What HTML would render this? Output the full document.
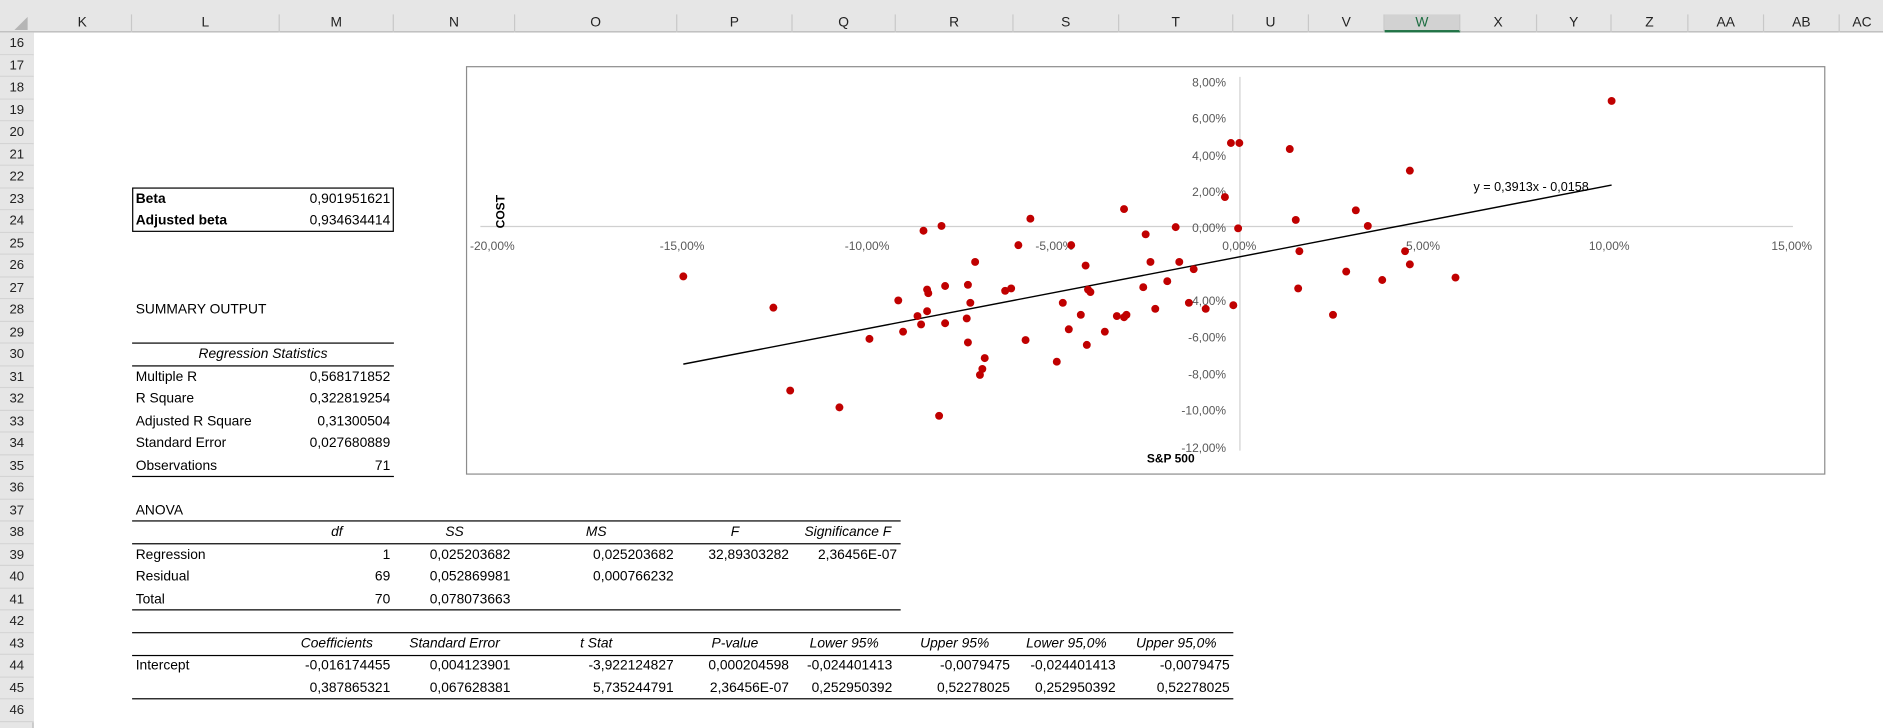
<!DOCTYPE html>
<html><head><meta charset="utf-8"><style>
html,body{margin:0;padding:0;width:1883px;height:727px;overflow:hidden;background:#fff}
#w{position:absolute;left:0;top:0;width:1569px;height:606px;transform:scale(1.2009,1.2017);transform-origin:0 0;font-family:"Liberation Sans",sans-serif;font-size:11.5px;color:#000}
.a{position:absolute;white-space:nowrap;line-height:18.5px;height:18.5px}
.r{text-align:right}.c{text-align:center}.i{font-style:italic}.b{font-weight:bold}
.hd{position:absolute;top:12px;height:15px;line-height:15px;text-align:center;color:#222;font-size:11.5px;border-right:1px solid #c8c8c8;box-sizing:border-box}
.rn{position:absolute;left:0;width:28px;height:18.5px;line-height:18.5px;text-align:center;color:#222;font-size:11px;border-bottom:1px solid #d4d4d4;box-sizing:border-box;background:#e6e6e6}
.hl{position:absolute;height:0;border-top:1.3px solid #000}
</style></head><body><div id="w">
<div style="position:absolute;left:0;top:0;width:1569px;height:27px;background:#e6e6e6;border-bottom:1px solid #b5b5b5;box-sizing:border-box"></div>
<div style="position:absolute;left:0;top:27px;width:28px;height:579px;background:#e6e6e6;border-right:1px solid #b5b5b5;box-sizing:border-box"></div>
<svg style="position:absolute;left:10px;top:13px" width="14" height="13"><polygon points="13,1 13,12 2,12" fill="#b5b5b5"/></svg>
<div class="hd" style="left:28px;width:82px">K</div>
<div class="hd" style="left:110px;width:123px">L</div>
<div class="hd" style="left:233px;width:95px">M</div>
<div class="hd" style="left:328px;width:101px">N</div>
<div class="hd" style="left:429px;width:135px">O</div>
<div class="hd" style="left:564px;width:96px">P</div>
<div class="hd" style="left:660px;width:86px">Q</div>
<div class="hd" style="left:746px;width:98px">R</div>
<div class="hd" style="left:844px;width:88px">S</div>
<div class="hd" style="left:932px;width:95px">T</div>
<div class="hd" style="left:1027px;width:63px">U</div>
<div class="hd" style="left:1090px;width:63px">V</div>
<div class="hd" style="left:1153px;width:63px;background:#d2d2d2;color:#1e6e42;border-bottom:2px solid #217346;height:15px">W</div>
<div class="hd" style="left:1216px;width:64px">X</div>
<div class="hd" style="left:1280px;width:62px">Y</div>
<div class="hd" style="left:1342px;width:64px">Z</div>
<div class="hd" style="left:1406px;width:63px">AA</div>
<div class="hd" style="left:1469px;width:63px">AB</div>
<div class="hd" style="left:1532px;width:37px;border-right:none">AC</div>
<div class="rn" style="top:27px">16</div><div class="rn" style="top:45.5px">17</div><div class="rn" style="top:64px">18</div><div class="rn" style="top:82.5px">19</div><div class="rn" style="top:101px">20</div><div class="rn" style="top:119.5px">21</div><div class="rn" style="top:138px">22</div><div class="rn" style="top:156.5px">23</div><div class="rn" style="top:175px">24</div><div class="rn" style="top:193.5px">25</div><div class="rn" style="top:212px">26</div><div class="rn" style="top:230.5px">27</div><div class="rn" style="top:249px">28</div><div class="rn" style="top:267.5px">29</div><div class="rn" style="top:286px">30</div><div class="rn" style="top:304.5px">31</div><div class="rn" style="top:323px">32</div><div class="rn" style="top:341.5px">33</div><div class="rn" style="top:360px">34</div><div class="rn" style="top:378.5px">35</div><div class="rn" style="top:397px">36</div><div class="rn" style="top:415.5px">37</div><div class="rn" style="top:434px">38</div><div class="rn" style="top:452.5px">39</div><div class="rn" style="top:471px">40</div><div class="rn" style="top:489.5px">41</div><div class="rn" style="top:508px">42</div><div class="rn" style="top:526.5px">43</div><div class="rn" style="top:545px">44</div><div class="rn" style="top:563.5px">45</div><div class="rn" style="top:582px">46</div>

<div style="position:absolute;left:110px;top:156px;width:218px;height:37px;border:1px solid #000;box-sizing:border-box"></div>
<div class="a b" style="left:113px;top:156.5px">Beta</div><div class="a r" style="left:233px;width:92px;top:156.5px">0,901951621</div>
<div class="a b" style="left:113px;top:175px">Adjusted beta</div><div class="a r" style="left:233px;width:92px;top:175px">0,934634414</div>

<div class="a" style="left:113px;top:249px">SUMMARY OUTPUT</div>
<div class="hl" style="left:110px;width:218px;top:285px"></div>
<div class="a i c" style="left:110px;width:218px;top:286px">Regression Statistics</div>
<div class="hl" style="left:110px;width:218px;top:304px;border-top-width:1px"></div>
<div class="a" style="left:113px;top:304.5px">Multiple R</div><div class="a r" style="left:233px;width:92px;top:304.5px">0,568171852</div>
<div class="a" style="left:113px;top:323px">R Square</div><div class="a r" style="left:233px;width:92px;top:323px">0,322819254</div>
<div class="a" style="left:113px;top:341.5px">Adjusted R Square</div><div class="a r" style="left:233px;width:92px;top:341.5px">0,31300504</div>
<div class="a" style="left:113px;top:360px">Standard Error</div><div class="a r" style="left:233px;width:92px;top:360px">0,027680889</div>
<div class="a" style="left:113px;top:378.5px">Observations</div><div class="a r" style="left:233px;width:92px;top:378.5px">71</div>
<div class="hl" style="left:110px;width:218px;top:396px"></div>

<div class="a" style="left:113px;top:415.5px">ANOVA</div>
<div class="hl" style="left:110px;width:640px;top:433px"></div>
<div class="a i c" style="left:233px;width:95px;top:434px">df</div>
<div class="a i c" style="left:328px;width:101px;top:434px">SS</div>
<div class="a i c" style="left:429px;width:135px;top:434px">MS</div>
<div class="a i c" style="left:564px;width:96px;top:434px">F</div>
<div class="a i c" style="left:660px;width:92px;top:434px">Significance F</div>
<div class="hl" style="left:110px;width:640px;top:452px;border-top-width:1px"></div>
<div class="a" style="left:113px;top:452.5px">Regression</div><div class="a r" style="left:233px;width:92px;top:452.5px">1</div><div class="a r" style="left:328px;width:97px;top:452.5px">0,025203682</div><div class="a r" style="left:429px;width:132px;top:452.5px">0,025203682</div><div class="a r" style="left:564px;width:93px;top:452.5px">32,89303282</div><div class="a r" style="left:660px;width:87px;top:452.5px">2,36456E-07</div>
<div class="a" style="left:113px;top:471px">Residual</div><div class="a r" style="left:233px;width:92px;top:471px">69</div><div class="a r" style="left:328px;width:97px;top:471px">0,052869981</div><div class="a r" style="left:429px;width:132px;top:471px">0,000766232</div>
<div class="a" style="left:113px;top:489.5px">Total</div><div class="a r" style="left:233px;width:92px;top:489.5px">70</div><div class="a r" style="left:328px;width:97px;top:489.5px">0,078073663</div>
<div class="hl" style="left:110px;width:640px;top:507px"></div>

<div class="hl" style="left:110px;width:917px;top:526px"></div>
<div class="a i c" style="left:233px;width:95px;top:526.5px">Coefficients</div>
<div class="a i c" style="left:328px;width:101px;top:526.5px">Standard Error</div>
<div class="a i c" style="left:429px;width:135px;top:526.5px">t Stat</div>
<div class="a i c" style="left:564px;width:96px;top:526.5px">P-value</div>
<div class="a i c" style="left:660px;width:86px;top:526.5px">Lower 95%</div>
<div class="a i c" style="left:746px;width:98px;top:526.5px">Upper 95%</div>
<div class="a i c" style="left:844px;width:88px;top:526.5px">Lower 95,0%</div>
<div class="a i c" style="left:932px;width:95px;top:526.5px">Upper 95,0%</div>
<div class="hl" style="left:110px;width:917px;top:545px;border-top-width:1px"></div>
<div class="a" style="left:113px;top:545px">Intercept</div><div class="a r" style="left:233px;width:92px;top:545px">-0,016174455</div><div class="a r" style="left:328px;width:97px;top:545px">0,004123901</div><div class="a r" style="left:429px;width:132px;top:545px">-3,922124827</div><div class="a r" style="left:564px;width:93px;top:545px">0,000204598</div><div class="a r" style="left:660px;width:83px;top:545px">-0,024401413</div><div class="a r" style="left:746px;width:95px;top:545px">-0,0079475</div><div class="a r" style="left:844px;width:85px;top:545px">-0,024401413</div><div class="a r" style="left:932px;width:92px;top:545px">-0,0079475</div>
<div class="a r" style="left:233px;width:92px;top:563.5px">0,387865321</div><div class="a r" style="left:328px;width:97px;top:563.5px">0,067628381</div><div class="a r" style="left:429px;width:132px;top:563.5px">5,735244791</div><div class="a r" style="left:564px;width:93px;top:563.5px">2,36456E-07</div><div class="a r" style="left:660px;width:83px;top:563.5px">0,252950392</div><div class="a r" style="left:746px;width:95px;top:563.5px">0,52278025</div><div class="a r" style="left:844px;width:85px;top:563.5px">0,252950392</div><div class="a r" style="left:932px;width:92px;top:563.5px">0,52278025</div>
<div class="hl" style="left:110px;width:917px;top:581px"></div>

<svg style="position:absolute;left:0;top:0" width="1569" height="606" font-family="Liberation Sans, sans-serif">
<rect x="388.5" y="55.5" width="1131" height="339" fill="#fff" stroke="#8c8c8c" stroke-width="1"/>
<line x1="400" y1="188.5" x2="1493" y2="188.5" stroke="#d0d0d0"/>
<line x1="1032.5" y1="64" x2="1032.5" y2="375" stroke="#d0d0d0"/>
<g font-size="10" fill="#595959" text-anchor="middle">
<text x="410" y="208">-20,00%</text><text x="568" y="208">-15,00%</text><text x="722" y="208">-10,00%</text><text x="878" y="208">-5,00%</text><text x="1032" y="208">0,00%</text><text x="1185" y="208">5,00%</text><text x="1340" y="208">10,00%</text><text x="1492" y="208">15,00%</text>
</g>
<g font-size="10" fill="#595959" text-anchor="end">
<text x="1021" y="72">8,00%</text><text x="1021" y="102">6,00%</text><text x="1021" y="133">4,00%</text><text x="1021" y="163">2,00%</text><text x="1021" y="193">0,00%</text><text x="1021" y="254">-4,00%</text><text x="1021" y="284">-6,00%</text><text x="1021" y="315">-8,00%</text><text x="1021" y="345">-10,00%</text><text x="1021" y="376">-12,00%</text>
</g>
<line x1="569" y1="303" x2="1342" y2="154" stroke="#000" stroke-width="1.2"/>
<text x="1227" y="159" font-size="10.5">y = 0,3913x - 0,0158</text>
<text x="955" y="385" font-size="10" font-weight="bold">S&amp;P 500</text>
<text transform="translate(420,190) rotate(-90)" font-size="10" font-weight="bold">COST</text>
<g fill="#c00000">
<circle cx="569" cy="230" r="3.3"/><circle cx="644" cy="256" r="3.3"/><circle cx="658" cy="325" r="3.3"/><circle cx="699" cy="339" r="3.3"/><circle cx="724" cy="282" r="3.3"/><circle cx="748" cy="250" r="3.3"/><circle cx="752" cy="276" r="3.3"/><circle cx="764" cy="263" r="3.3"/><circle cx="767" cy="270" r="3.3"/><circle cx="769" cy="192" r="3.3"/><circle cx="772" cy="241" r="3.3"/><circle cx="773" cy="244" r="3.3"/><circle cx="772" cy="259" r="3.3"/><circle cx="784" cy="188" r="3.3"/><circle cx="787" cy="238" r="3.3"/><circle cx="787" cy="269" r="3.3"/><circle cx="782" cy="346" r="3.3"/><circle cx="805" cy="265" r="3.3"/><circle cx="806" cy="237" r="3.3"/><circle cx="808" cy="252" r="3.3"/><circle cx="806" cy="285" r="3.3"/><circle cx="812" cy="218" r="3.3"/><circle cx="816" cy="312" r="3.3"/><circle cx="818" cy="307" r="3.3"/><circle cx="820" cy="298" r="3.3"/><circle cx="837" cy="242" r="3.3"/><circle cx="842" cy="240" r="3.3"/><circle cx="848" cy="204" r="3.3"/><circle cx="854" cy="283" r="3.3"/><circle cx="858" cy="182" r="3.3"/><circle cx="880" cy="301" r="3.3"/><circle cx="885" cy="252" r="3.3"/><circle cx="890" cy="274" r="3.3"/><circle cx="892" cy="204" r="3.3"/><circle cx="904" cy="221" r="3.3"/><circle cx="900" cy="262" r="3.3"/><circle cx="905" cy="287" r="3.3"/><circle cx="908" cy="243" r="3.3"/><circle cx="906" cy="241" r="3.3"/><circle cx="920" cy="276" r="3.3"/><circle cx="930" cy="263" r="3.3"/><circle cx="936" cy="264" r="3.3"/><circle cx="938" cy="262" r="3.3"/><circle cx="936" cy="174" r="3.3"/><circle cx="952" cy="239" r="3.3"/><circle cx="954" cy="195" r="3.3"/><circle cx="958" cy="218" r="3.3"/><circle cx="962" cy="257" r="3.3"/><circle cx="972" cy="234" r="3.3"/><circle cx="979" cy="189" r="3.3"/><circle cx="982" cy="218" r="3.3"/><circle cx="990" cy="252" r="3.3"/><circle cx="994" cy="224" r="3.3"/><circle cx="1004" cy="257" r="3.3"/><circle cx="1020" cy="164" r="3.3"/><circle cx="1025" cy="119" r="3.3"/><circle cx="1032" cy="119" r="3.3"/><circle cx="1027" cy="254" r="3.3"/><circle cx="1031" cy="190" r="3.3"/><circle cx="1074" cy="124" r="3.3"/><circle cx="1079" cy="183" r="3.3"/><circle cx="1081" cy="240" r="3.3"/><circle cx="1082" cy="209" r="3.3"/><circle cx="1110" cy="262" r="3.3"/><circle cx="1121" cy="226" r="3.3"/><circle cx="1129" cy="175" r="3.3"/><circle cx="1139" cy="188" r="3.3"/><circle cx="1151" cy="233" r="3.3"/><circle cx="1170" cy="209" r="3.3"/><circle cx="1174" cy="142" r="3.3"/><circle cx="1174" cy="220" r="3.3"/><circle cx="1212" cy="231" r="3.3"/><circle cx="1342" cy="84" r="3.3"/>
</g>
</svg>
</div></body></html>
